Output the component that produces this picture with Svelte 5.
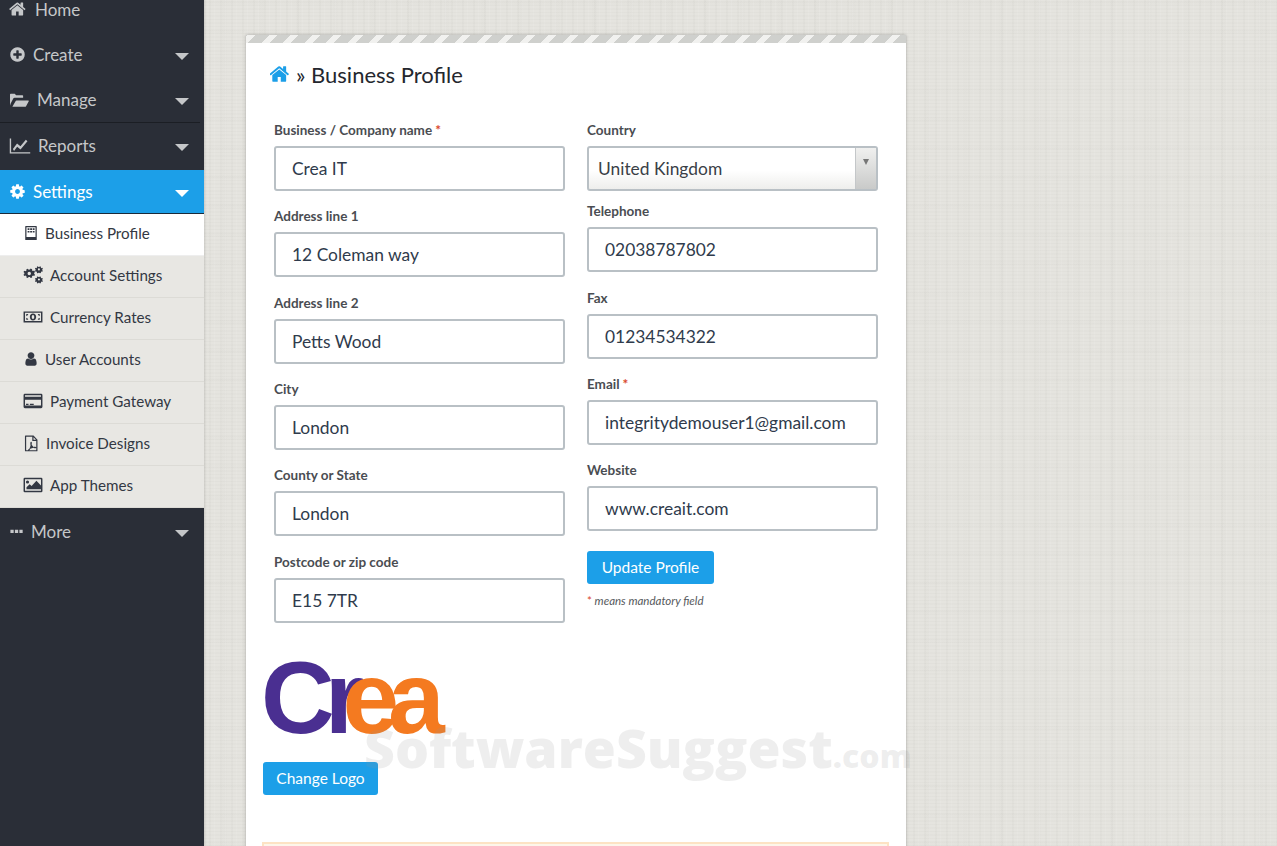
<script>
	const icons = {
		home: 'M1408 992v480q0 26-19 45t-45 19h-384v-384h-256v384h-384q-26 0-45-19t-19-45v-480q0-1 .5-3t.5-3l575-474 575 474q1 2 1 6zm223-69l-62 74q-8 9-21 11h-3q-13 0-21-7l-692-577-692 577q-12 8-24 7-13-2-21-11l-62-74q-8-10-7-23.5t11-21.5l719-599q32-26 76-26t76 26l244 204v-195q0-14 9-23t23-9h192q14 0 23 9t9 23v408l219 182q10 8 11 21.5t-7 23.5z',
		plus: 'M1344 960v-128q0-26-19-45t-45-19h-256v-256q0-26-19-45t-45-19h-128q-26 0-45 19t-19 45v256h-256q-26 0-45 19t-19 45v128q0 26 19 45t45 19h256v256q0 26 19 45t45 19h128q26 0 45-19t19-45v-256h256q26 0 45-19t19-45zm320-64q0 209-103 385.5t-279.5 279.5-385.5 103-385.5-103-279.5-279.5-103-385.5 103-385.5 279.5-279.5 385.5-103 385.5 103 279.5 279.5 103 385.5z',
		folder: 'M100 1400V400q0-60 60-60h360l120 130h560q60 0 60 60v170H500q-70 0-110 60L160 1200l-60 200zm220 80l270-480q30-50 90-50h1040q60 0 40 60l-240 440q-30 50-90 50H360q-60 0-40-20z',
		chart: 'M80 300h110v1090h1520v110H80zM330 1130l330-430 270 220 430-520 130 110-550 670-270-220-250 330z',
		cog: 'M1152 896q0-106-75-181t-181-75-181 75-75 181 75 181 181 75 181-75 75-181zm512-109v222q0 12-8 23t-20 13l-185 28q-19 54-39 91 35 50 107 138 10 12 10 25t-9 23q-27 37-99 108t-94 71q-12 0-26-9l-138-108q-44 23-91 38-16 136-29 186-7 28-36 28h-222q-14 0-24.5-8.5t-11.5-21.5l-28-184q-49-16-90-37l-141 107q-10 9-25 9-14 0-25-11-126-114-165-168-7-10-7-23 0-12 8-23 15-21 51-66.5t54-70.5q-27-50-41-99l-183-27q-13-2-21-12.5t-8-23.5v-222q0-12 8-23t19-13l186-28q14-46 39-92-40-57-107-138-10-12-10-24 0-10 9-23 26-36 98.5-107.5t94.5-71.5q13 0 26 10l138 107q44-23 91-38 16-136 29-186 7-28 36-28h222q14 0 24.5 8.5t11.5 21.5l28 184q49 16 90 37l142-107q9-9 24-9 13 0 25 10 129 119 165 170 7 8 7 22 0 12-8 23-15 21-51 66.5t-54 70.5q26 50 41 98l183 28q13 2 21 12.5t8 23.5z',
		user: 'M1536 1399q0 109-62.5 187t-150.5 78h-854q-88 0-150.5-78t-62.5-187q0-85 8.5-160.5t31.5-152 58.5-131 94-89 134.5-34.5q131 128 313 128t313-128q76 0 134.5 34.5t94 89 58.5 131 31.5 152 8.5 160.5zm-256-887q0 159-112.5 271.5t-271.5 112.5-271.5-112.5-112.5-271.5 112.5-271.5 271.5-112.5 271.5 112.5 112.5 271.5z',
		dots: 'M150 690h400v400H150zM700 690h400v400H700zM1250 690h400v400h-400z',
		building: 'M300 100h1190q60 0 60 60v1470q0 60-60 60H300q-60 0-60-60V160q0-60 60-60zm80 130v1130h1030V230zm130 130h210v190H510zm290 0h210v190H800zm290 0h210v190h-210zM510 660h210v190H510zm290 0h210v190H800zm290 0h210v190h-210zM680 1440h430v130H680z',
		cogs: 'M620 420l70-90 130 50-10 110 90 60 100-50 80 120-80 70v110l80 70-80 120-100-50-90 60 10 110-130 50-70-90H510l-70 90-130-50 10-110-90-60-100 50-80-120 80-70V700l-80-70 80-120 100 50 90-60-10-110 130-50 70 90zM565 610a150 150 0 100 300 150 150 0 000-300zM1330 120l50 60h80l50-60 90 40-10 80 60 50 70-30 50 90-60 50v70l60 50-50 90-70-30-60 50 10 80-90 40-50-60h-80l-50 60-90-40 10-80-60-50-70 30-50-90 60-50v-70l-60-50 50-90 70 30 60-50-10-80zm90 190a90 90 0 100 180 90 90 0 000-180zM1330 1020l50 60h80l50-60 90 40-10 80 60 50 70-30 50 90-60 50v70l60 50-50 90-70-30-60 50 10 80-90 40-50-60h-80l-50 60-90-40 10-80-60-50-70 30-50-90 60-50v-70l-60-50 50-90 70 30 60-50-10-80zm90 190a90 90 0 100 180 90 90 0 000-180z',
		money: 'M60 400h1672v990H60zm130 130v730h1412V530zM896 590c170 0 280 140 280 305s-110 305-280 305-280-140-280-305 110-305 280-305zm0 130c-70 0-110 80-110 175s40 175 110 175 110-80 110-175-40-175-110-175zM300 640h180q-20 120-180 180zm1192 0v180q-160-60-180-180zM300 1150v-180q160 60 180 180zm1192 0h-180q20-120 180-180z',
		card: 'M180 260h1432q120 0 120 120v1030q0 120-120 120H180q-120 0-120-120V380q0-120 120-120zm10 130v130h1412V390zm0 390v500q0 20 20 20h1372q20 0 20-20V780zm90 370h220v100H280zm340 0h340v100H620z',
		pdf: 'M260 60h850l420 430v1180q0 60-60 60H260q-60 0-60-60V120q0-60 60-60zm70 130v1420h1070V620H980V190zm780 30v270h260zM860 720c90 0 90 120 50 290 60 130 150 210 210 250 130-20 280-10 290 70 10 90-150 90-300 10-110 20-250 70-340 110-80 160-170 250-230 220-70-40 0-160 150-250 50-100 90-220 110-330-50-140-40-370 60-370z',
		image: 'M170 250h1452q110 0 110 110v1070q0 110-110 110H170q-110 0-110-110V360q0-110 110-110zm20 130v1030h1412V380zm220 110a140 140 0 110 280 140 140 0 010-280zM320 1280v-190l280-270 170 170 430-470 400 420v340z'
	};

	const topItems = [
		{ label: 'Home', icon: 'home', w: 16, gap: 9, caret: false },
		{ label: 'Create', icon: 'plus', w: 15, gap: 8, caret: true },
		{ label: 'Manage', icon: 'folder', w: 18, gap: 9, caret: true, line: true },
		{ label: 'Reports', icon: 'chart', w: 20, gap: 8, caret: true, tall: true },
		{ label: 'Settings', icon: 'cog', w: 15, gap: 8, caret: true, active: true }
	];

	const subItems = [
		{ label: 'Business Profile', icon: 'building', w: 14, gap: 7, current: true },
		{ label: 'Account Settings', icon: 'cogs', w: 18, gap: 8 },
		{ label: 'Currency Rates', icon: 'money', w: 18, gap: 8 },
		{ label: 'User Accounts', icon: 'user', w: 14, gap: 7 },
		{ label: 'Payment Gateway', icon: 'card', w: 18, gap: 8 },
		{ label: 'Invoice Designs', icon: 'pdf', w: 15, gap: 7 },
		{ label: 'App Themes', icon: 'image', w: 18, gap: 8 }
	];

	const leftFields = [
		{ label: 'Business / Company name', value: 'Crea IT', required: true },
		{ label: 'Address line 1', value: '12 Coleman way' },
		{ label: 'Address line 2', value: 'Petts Wood' },
		{ label: 'City', value: 'London' },
		{ label: 'County or State', value: 'London' },
		{ label: 'Postcode or zip code', value: 'E15 7TR' }
	];

	const rightFields = [
		{ label: 'Telephone', value: '02038787802' },
		{ label: 'Fax', value: '01234534322' },
		{ label: 'Email', value: 'integritydemouser1@gmail.com', required: true },
		{ label: 'Website', value: 'www.creait.com' }
	];
</script>

{#snippet icon(name, w)}
	<svg class="icon" viewBox="100 100 1592 1592" width={w} height={w} fill="currentColor"><path d={icons[name]} /></svg>
{/snippet}

{#snippet field(f)}
	<div class="field">
		<span class="label">{f.label}{#if f.required}<span class="req">*</span>{/if}</span>
		<input type="text" value={f.value} readonly />
	</div>
{/snippet}

<div class="page">
	<nav class="sidebar">
		{#each topItems as item}
			<div class="top-item" class:active={item.active} class:line={item.line} class:tall={item.tall}>
				<span class="top-left" style="gap: {item.gap}px">
					{@render icon(item.icon, item.w)}
					{item.label}
				</span>
				{#if item.caret}<span class="caret"></span>{/if}
			</div>
		{/each}
		<ul class="submenu">
			{#each subItems as item}
				<li class:current={item.current} style="gap: {item.gap}px">
					{@render icon(item.icon, item.w)}
					{item.label}
				</li>
			{/each}
		</ul>
		<div class="top-item">
			<span class="top-left" style="gap: 8px">
				{@render icon('dots', 13)}
				More
			</span>
			<span class="caret"></span>
		</div>
	</nav>

	<main>
		<section class="card">
			<div class="stripes"></div>
			<h1>
				<svg class="title-home" viewBox="64 64 1664 1664" width="20" height="20" fill="#1c9fe8"><path d={icons.home} /></svg>
				» Business Profile
			</h1>
			<div class="form">
				<div class="col">
					{#each leftFields as f}
						{@render field(f)}
					{/each}
				</div>
				<div class="col">
					<div class="field country">
						<span class="label">Country</span>
						<div class="select">
							<span class="select-value">United Kingdom</span>
							<span class="select-arrow"><i></i></span>
						</div>
					</div>
					{#each rightFields as f}
						{@render field(f)}
					{/each}
					<button class="btn update">Update Profile</button>
					<p class="note"><span class="req">*</span> means mandatory field</p>
				</div>
			</div>
			<div class="logo"><span class="purple"><span class="l-c">C</span><span class="l-r">r</span></span><span class="orange"><span class="l-e">e</span>a</span></div>
			<button class="btn change">Change Logo</button>
			<div class="notice"></div>
		</section>
		<div class="watermark">SoftwareSuggest<small>.com</small></div>
	</main>
</div>

<style>
	:global(body) {
		overflow: hidden;
	}

	.page {
		display: flex;
		height: 846px;
		overflow: hidden;
		font-family: Lato, "Noto Sans", sans-serif;
		background-color: #e5e4df;
		background-image:
			repeating-linear-gradient(0deg, rgba(110, 110, 100, 0.03) 0 1px, transparent 1px 3px, rgba(110, 110, 100, 0.025) 3px 5px, transparent 5px 7px),
			repeating-linear-gradient(90deg, rgba(110, 110, 100, 0.03) 0 2px, transparent 2px 5px, rgba(255, 255, 255, 0.08) 5px 6px, transparent 6px 11px),
			repeating-linear-gradient(90deg, rgba(110, 110, 100, 0.012) 0 5px, transparent 5px 37px),
			repeating-linear-gradient(0deg, rgba(110, 110, 100, 0.012) 0 4px, transparent 4px 29px);
	}

	.sidebar {
		width: 204px;
		flex: none;
		margin-top: -13.5px;
		background: #2a2e37;
		box-shadow: 1px 0 2px rgba(0, 0, 0, 0.12);
	}

	.top-item {
		height: 45.5px;
		box-sizing: border-box;
		padding: 0 15px 0 10px;
		display: flex;
		align-items: center;
		justify-content: space-between;
		color: #c5c7c9;
		font-size: 17px;
	}

	.top-item.line {
		border-bottom: 1px solid #1b1e24;
		margin-right: 4px;
		padding-right: 11px;
	}

	.top-item.tall {
		height: 47px;
		padding-bottom: 2px;
	}

	.top-item.active {
		height: 43.5px;
		background: #1c9fe8;
		color: #fff;
		border-bottom: 1px solid #1a2a3a;
	}

	.top-left {
		display: flex;
		align-items: center;
	}

	.icon {
		flex: none;
		overflow: visible;
	}

	.caret {
		width: 0;
		height: 0;
		margin-top: 4px;
		border-left: 7px solid transparent;
		border-right: 7px solid transparent;
		border-top: 7px solid currentColor;
	}

	.submenu {
		list-style: none;
		margin: 0 0 1.5px;
		padding: 0;
		background: #e8e7e3;
	}

	.submenu li {
		height: 42px;
		box-sizing: border-box;
		padding: 0 0 2px 24px;
		display: flex;
		align-items: center;
		font-size: 15.2px;
		color: #333843;
		background: #e8e7e3;
		border-bottom: 1px solid #dcdbd6;
	}

	.submenu li.current {
		background: #fff;
		border-bottom-color: #eee;
	}

	main {
		position: relative;
		flex: 1;
		padding: 35px 0 0 42px;
	}

	.card {
		width: 660px;
		min-height: 900px;
		box-sizing: border-box;
		padding: 0 16px;
		background: #fff;
		box-shadow: 0 0 3px rgba(0, 0, 0, 0.28);
	}

	.stripes {
		height: 8px;
		margin: 0 -16px;
		background: repeating-linear-gradient(-45deg, #cfd0cd 0 9.5px, #f1f1ef 9.5px 15.2px);
	}

	h1 {
		display: flex;
		align-items: center;
		gap: 6px;
		height: 48px;
		margin: 7px 0 0 8px;
		font-size: 22px;
		font-weight: 400;
		color: #24272e;
	}

	.form {
		display: grid;
		grid-template-columns: 291px 291px;
		gap: 22px;
		padding: 24px 0 0 12px;
	}

	.field {
		display: flex;
		flex-direction: column;
		margin-bottom: 17.33px;
	}

	.field.country {
		margin-bottom: 12.3px;
	}

	.label {
		height: 24px;
		line-height: 17px;
		font-size: 13.5px;
		font-weight: 700;
		color: #4a4d52;
	}

	.req {
		margin-left: 3px;
		color: #d9472b;
	}

	input,
	.select {
		width: 291px;
		height: 45px;
		box-sizing: border-box;
		border: 2px solid #b9c0c5;
		border-radius: 3px;
		font-family: inherit;
		font-size: 17.4px;
		color: #2f3b4c;
	}

	input {
		padding: 0 16px;
		outline: none;
	}

	.select {
		display: flex;
		justify-content: space-between;
		align-items: stretch;
		background: linear-gradient(#fff 55%, #eeeeec);
		color: #3a3f47;
	}

	.select-value {
		padding-left: 9px;
		line-height: 41px;
	}

	.select-arrow {
		width: 21px;
		display: flex;
		justify-content: center;
		padding-top: 11px;
		box-sizing: border-box;
		border-left: 1px solid #c4c7c9;
		background: linear-gradient(#f0f0ef, #c9cac9);
	}

	.select-arrow i {
		width: 0;
		height: 0;
		border-left: 3.5px solid transparent;
		border-right: 3.5px solid transparent;
		border-top: 6px solid #777;
	}

	.btn {
		display: block;
		height: 33px;
		padding: 0;
		border: 0;
		border-radius: 3px;
		background: #1c9fe8;
		color: #fff;
		font-family: inherit;
		font-size: 15.5px;
	}

	.btn.update {
		width: 127px;
		margin-top: 19.5px;
	}

	.note {
		margin: 10px 0 0;
		font-size: 11.5px;
		font-style: italic;
		color: #55585c;
	}

	.note .req {
		margin: 0;
		font-style: normal;
	}

	.logo {
		height: 90px;
		margin: 13px 0 0 -1px;
		font-family: "Liberation Sans", sans-serif;
		font-size: 102px;
		font-weight: 700;
		line-height: 90px;
	}

	.l-c {
		letter-spacing: -10px;
	}

	.l-r {
		letter-spacing: -22px;
	}

	.l-e {
		letter-spacing: -11px;
	}

	.purple {
		color: #4a2f91;
	}

	.orange {
		color: #f47a20;
	}

	.btn.change {
		width: 115px;
		margin: 19px 0 0 1px;
	}

	.notice {
		height: 40px;
		margin: 47px 1px 0 0;
		background: #fdf6ea;
		border: 2px solid #fde3c4;
		box-sizing: border-box;
	}

	.watermark {
		position: absolute;
		left: 160px;
		top: 716px;
		font-family: "Open Sans", sans-serif;
		font-size: 53.5px;
		font-weight: 800;
		line-height: 64px;
		color: rgba(150, 150, 150, 0.16);
		white-space: nowrap;
		pointer-events: none;
	}

	.watermark small {
		font-size: 32px;
	}
</style>
